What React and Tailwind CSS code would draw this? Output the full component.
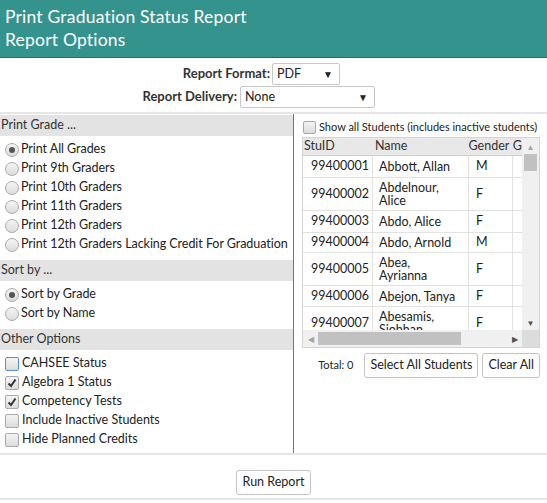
import React from "react";

const font = { fontFamily: "Lato, 'Open Sans', sans-serif" };

const Radio = ({ checked, label }) => (
  <label className="flex items-center h-[19px] pl-[5px] gap-[2px]">
    <span className="w-[14px] h-[14px] rounded-full border border-[#a9a9a9] bg-gradient-to-b from-[#f4f4f4] to-[#dcdcdc] flex items-center justify-center">
      {checked && <span className="w-[6px] h-[6px] rounded-full bg-[#555]" />}
    </span>
    <span className="tracking-[-0.05px]">{label}</span>
  </label>
);

const Check = ({ checked, focus, label }) => (
  <label className="flex items-center h-[19px] pl-[5px] gap-[3px]">
    <span
      className={`w-[14px] h-[14px] rounded-[2px] border bg-gradient-to-b from-[#f4f4f4] to-[#dcdcdc] flex items-center justify-center ${
        focus ? "border-[#5b8fd4]" : "border-[#a9a9a9]"
      }`}
    >
      {checked && (
        <svg width="10" height="10" viewBox="0 0 10 10">
          <path d="M1.5 5.5 L4 8 L8.5 1.5" stroke="#333" strokeWidth="2" fill="none" />
        </svg>
      )}
    </span>
    <span>{label}</span>
  </label>
);

const Section = ({ title, children }) => (
  <div>
    <div className="bg-[#e3e3e3] h-[21px] flex items-center pl-[1px] text-[#333]">{title}</div>
    <div className="py-[4px]">{children}</div>
  </div>
);

const Select = ({ value, w }) => (
  <div className={`${w} h-[22px] border border-[#c8c8c8] rounded-[2px] flex items-center justify-between pl-[4px] pr-[6px] bg-white font-normal`}>
    <span>{value}</span>
    <span className="text-[10px] text-[#222]">▼</span>
  </div>
);

const students = [
  ["99400001", "Abbott, Allan", "M", 22],
  ["99400002", "Abdelnour, Alice", "F", 33],
  ["99400003", "Abdo, Alice", "F", 22],
  ["99400004", "Abdo, Arnold", "M", 20],
  ["99400005", "Abea, Ayrianna", "F", 33],
  ["99400006", "Abejon, Tanya", "F", 21],
  ["99400007", "Abesamis, Siobhan", "F", 33],
];

export default function App() {
  return (
    <div className="w-[547px] h-[503px] bg-white text-[12.5px] text-[#222] overflow-hidden" style={font}>
      <div className="bg-[#35938e] h-[58px] border-b border-[#555] px-[5px] pt-[5px] text-white text-[17.5px] leading-[23px] tracking-[0.2px]">
        <div>Print Graduation Status Report</div>
        <div>Report Options</div>
      </div>

      <div className="flex flex-col pt-[5px] gap-[1px] pb-[4px]">
        <div className="flex items-center">
          <span className="w-[270px] text-right font-bold text-[13px] text-[#333]">Report Format:</span>
          <span className="w-[2px]" />
          <Select value="PDF" w="w-[68px]" />
        </div>
        <div className="flex items-center">
          <span className="w-[237px] text-right font-bold text-[13px] text-[#333]">Report Delivery:</span>
          <span className="w-[3px]" />
          <Select value="None" w="w-[135px]" />
        </div>
      </div>

      <div className="flex border-t-[2px] border-[#e6e6e6] border-b-[2px] h-[343px]">
        <div className="w-[294px] border-r border-[#4a7cc2] pt-[1px]">
          <Section title="Print Grade ...">
            <Radio checked label="Print All Grades" />
            <Radio label="Print 9th Graders" />
            <Radio label="Print 10th Graders" />
            <Radio label="Print 11th Graders" />
            <Radio label="Print 12th Graders" />
            <Radio label="Print 12th Graders Lacking Credit For Graduation" />
          </Section>
          <div className="mt-[2px]">
            <Section title="Sort by ...">
              <Radio checked label="Sort by Grade" />
              <Radio label="Sort by Name" />
            </Section>
          </div>
          <div className="mt-[2px]">
            <Section title="Other Options">
              <Check focus label="CAHSEE Status" />
              <Check checked label="Algebra 1 Status" />
              <Check checked label="Competency Tests" />
              <Check label="Include Inactive Students" />
              <Check label="Hide Planned Credits" />
            </Section>
          </div>
        </div>

        <div className="flex-1 pl-[8px] pr-[6px] pt-[4px]">
          <div className="flex items-center gap-[3px] h-[19px] text-[11px] pl-[1px] whitespace-nowrap">
            <span className="w-[13px] h-[13px] rounded-[2px] border border-[#a9a9a9] bg-gradient-to-b from-[#f4f4f4] to-[#dcdcdc]" />
            <span>Show all Students (includes inactive students)</span>
          </div>
          <div className="w-[238px] h-[211px] border border-[#d4d4d4] flex flex-col">
            <div className="flex flex-1 overflow-hidden">
              <div className="flex-1 overflow-hidden">
                <div className="flex h-[18px] bg-[#e8e8e8] border-b border-[#cfcfcf] text-[#333] items-center whitespace-nowrap">
                  <div className="w-[70px] pl-[1px]">StuID</div>
                  <div className="w-[96px] pl-[3px]">Name</div>
                  <div className="w-[45px] pl-[2px] overflow-hidden">Gender</div>
                  <div className="pl-[2px]">G</div>
                </div>
                {students.map(([id, name, g, h]) => (
                  <div key={id} className="flex border-b border-[#e2e2e2]" style={{ height: h }}>
                    <div className="w-[70px] pl-[8px] border-r border-[#e2e2e2] flex items-center">{id}</div>
                    <div className="w-[96px] px-[6px] border-r border-[#e2e2e2] flex items-center leading-[13px]">
                      <span className="max-w-[78px]">{name}</span>
                    </div>
                    <div className="w-[44px] pl-[7px] border-r border-[#e2e2e2] flex items-center">{g}</div>
                    <div className="flex-1" />
                  </div>
                ))}
              </div>
              <div className="w-[17px] bg-[#f0f0f0] flex flex-col items-center">
                <span className="text-[8px] text-[#a3a3a3] leading-[14px] mt-[2px]">▲</span>
                <div className="w-[13px] h-[17px] bg-[#c1c1c1]" />
                <div className="flex-1" />
                <span className="text-[8px] text-[#505050] leading-[14px]">▼</span>
              </div>
            </div>
            <div className="h-[17px] flex bg-[#f0f0f0] items-center">
              <span className="w-[15px] text-[8px] text-[#a3a3a3] text-center">◀</span>
              <div className="w-[143px] h-[13px] bg-[#c1c1c1]" />
              <div className="flex-1" />
              <span className="w-[15px] text-[8px] text-[#505050] text-center">▶</span>
              <div className="w-[17px] h-full bg-[#dcdcdc]" />
            </div>
          </div>
          <div className="flex items-center justify-end gap-[4px] mt-[5px] pr-[1px]">
            <span className="text-[11px] mr-[7px]">Total: 0</span>
            <button className="h-[25px] px-[5px] border border-[#c4c4c4] rounded-[3px] bg-white">Select All Students</button>
            <button className="h-[25px] px-[5px] border border-[#c4c4c4] rounded-[3px] bg-white">Clear All</button>
          </div>
        </div>
      </div>

      <div className="flex justify-center pt-[15px] h-[45px] border-b-[2px] border-[#e6e6e6]">
        <button className="h-[25px] px-[6px] border border-[#c4c4c4] rounded-[3px] bg-white">Run Report</button>
      </div>
    </div>
  );
}
